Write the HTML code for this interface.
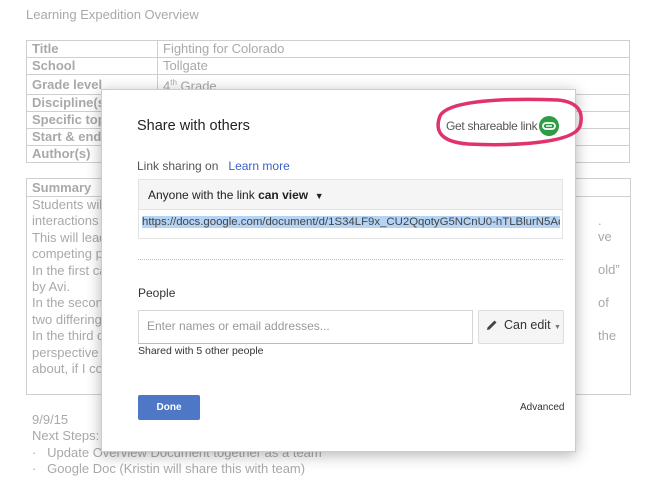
<!DOCTYPE html>
<html><head><style>
body{margin:0;width:660px;height:495px;background:#fff;position:relative;overflow:hidden;font-family:"Liberation Sans",sans-serif}
.d{position:absolute;color:#a9a9a9;font-size:13px;font-family:"Liberation Sans",sans-serif;white-space:nowrap}
table{position:absolute;left:26px;top:40px;width:604px;border-collapse:collapse}
td{border:1px solid #cfcfcf;height:16px;padding:0 0 0 5px;font-size:13px;color:#a9a9a9;font-family:"Liberation Sans",sans-serif;line-height:16px}
td.k{width:125px;font-weight:bold}
.sum{position:absolute;left:26px;top:178px;width:603px;height:215px;border:1px solid #cfcfcf}
.dlg{position:absolute;left:101px;top:89px;width:473px;height:361px;background:#fff;box-shadow:0 3px 14px rgba(0,0,0,.3);border:1px solid #ccc}
.a{position:absolute;white-space:nowrap}
</style></head><body>
<div class="d" style="left:26px;top:7px;font-size:13px">Learning Expedition Overview</div>
<table>
<tr><td class="k">Title</td><td>Fighting for Colorado</td></tr>
<tr><td class="k">School</td><td>Tollgate</td></tr>
<tr><td class="k">Grade level</td><td>4<sup style="font-size:8px">th</sup> Grade</td></tr>
<tr><td class="k">Discipline(s)</td><td></td></tr>
<tr><td class="k">Specific topic</td><td></td></tr>
<tr><td class="k">Start &amp; end</td><td></td></tr>
<tr><td class="k">Author(s)</td><td></td></tr>
</table>
<div class="sum"></div>
<div class="d" style="left:26px;top:179px;width:604px;height:17px;border-bottom:1px solid #cfcfcf"></div>
<div class="d" style="left:32px;top:180px;font-weight:bold">Summary</div>
<div class="d" style="left:32px;top:197px;line-height:16.4px">Students will<br>interactions<br>This will lead<br>competing p<br>In the first ca<br>by Avi.<br>In the secon<br>two differing<br>In the third c<br>perspective c<br>about, if I co</div>
<div class="d" style="left:598px;top:213px;line-height:16.4px">.<br>ve<br><br>old”<br><br>of<br><br>the</div>
<div class="d" style="left:32px;top:412px;line-height:16.4px">9/9/15<br>Next Steps:<br>·&nbsp;&nbsp; Update Overview Document together as a team<br>·&nbsp;&nbsp; Google Doc (Kristin will share this with team)</div>

<div class="dlg"></div>
<div class="a" style="left:137px;top:118px;font-size:14.5px;color:#222">Share with others</div>
<div class="a" style="left:446px;top:119px;font-size:12px;color:#555;letter-spacing:-0.3px">Get shareable link</div>
<svg class="a" style="left:538px;top:115px" width="22" height="22"><circle cx="11" cy="11" r="10" fill="#2e9c44"/><rect x="5" y="8" width="12" height="6" rx="3" fill="none" stroke="#fff" stroke-width="1.8"/><rect x="9" y="10" width="4" height="2" fill="#2e9c44"/><line x1="8" y1="11" x2="14" y2="11" stroke="#fff" stroke-width="1.4"/></svg>
<svg class="a" style="left:428px;top:94px" width="160" height="58"><path d="M12 22 C20 6 80 4 130 6 C150 8 156 18 152 32 C146 50 80 52 40 50 C14 48 6 38 12 22 Z" fill="none" stroke="#e0336a" stroke-width="3.5"/></svg>
<div class="a" style="left:137px;top:159px;font-size:12px;color:#555">Link sharing on&nbsp;&nbsp; <span style="color:#3b62c7">Learn more</span></div>
<div class="a" style="left:138px;top:179px;width:423px;height:58px;border:1px solid #e3e3e3"></div>
<div class="a" style="left:139px;top:180px;width:423px;height:29px;background:#f5f5f5;border-bottom:1px solid #e3e3e3"></div>
<div class="a" style="left:148px;top:188px;font-size:12px;color:#222">Anyone with the link <b>can view</b>&nbsp;&nbsp;<span style="font-size:9px">▼</span></div>
<div class="a" style="left:142px;top:216px;font-size:11.4px;color:#444;background:#b5d3f5;width:418px;overflow:hidden">https://docs.google.com/document/d/1S34LF9x_CU2QqotyG5NCnU0-hTLBlurN5Ac</div>
<div class="a" style="left:138px;top:259px;width:425px;border-top:1px dotted #bbb"></div>
<div class="a" style="left:138px;top:286px;font-size:12px;color:#333">People</div>
<div class="a" style="left:138px;top:310px;width:333px;height:32px;border:1px solid #d6d6d6;border-bottom-color:#bbb"></div>
<div class="a" style="left:147px;top:319px;font-size:12px;color:#999">Enter names or email addresses...</div>
<div class="a" style="left:478px;top:310px;width:84px;height:32px;border:1px solid #ddd;background:#f5f5f5;border-radius:2px"></div>
<svg class="a" style="left:486px;top:319px" width="12" height="12"><path d="M1 11 L1.5 8.5 L8.5 1.5 L10.5 3.5 L3.5 10.5 Z" fill="#444"/></svg>
<div class="a" style="left:504px;top:318px;font-size:12.5px;color:#333">Can edit <span style="font-size:7px;color:#777">▼</span></div>
<div class="a" style="left:138px;top:345px;font-size:10.5px;color:#333">Shared with 5 other people</div>
<div class="a" style="left:138px;top:395px;width:62px;height:25px;background:#4e77c5;border-radius:2px;color:#fff;font-size:10px;font-weight:bold;text-align:center;line-height:25px">Done</div>
<div class="a" style="left:520px;top:402px;font-size:10px;color:#333">Advanced</div>
</body></html>
